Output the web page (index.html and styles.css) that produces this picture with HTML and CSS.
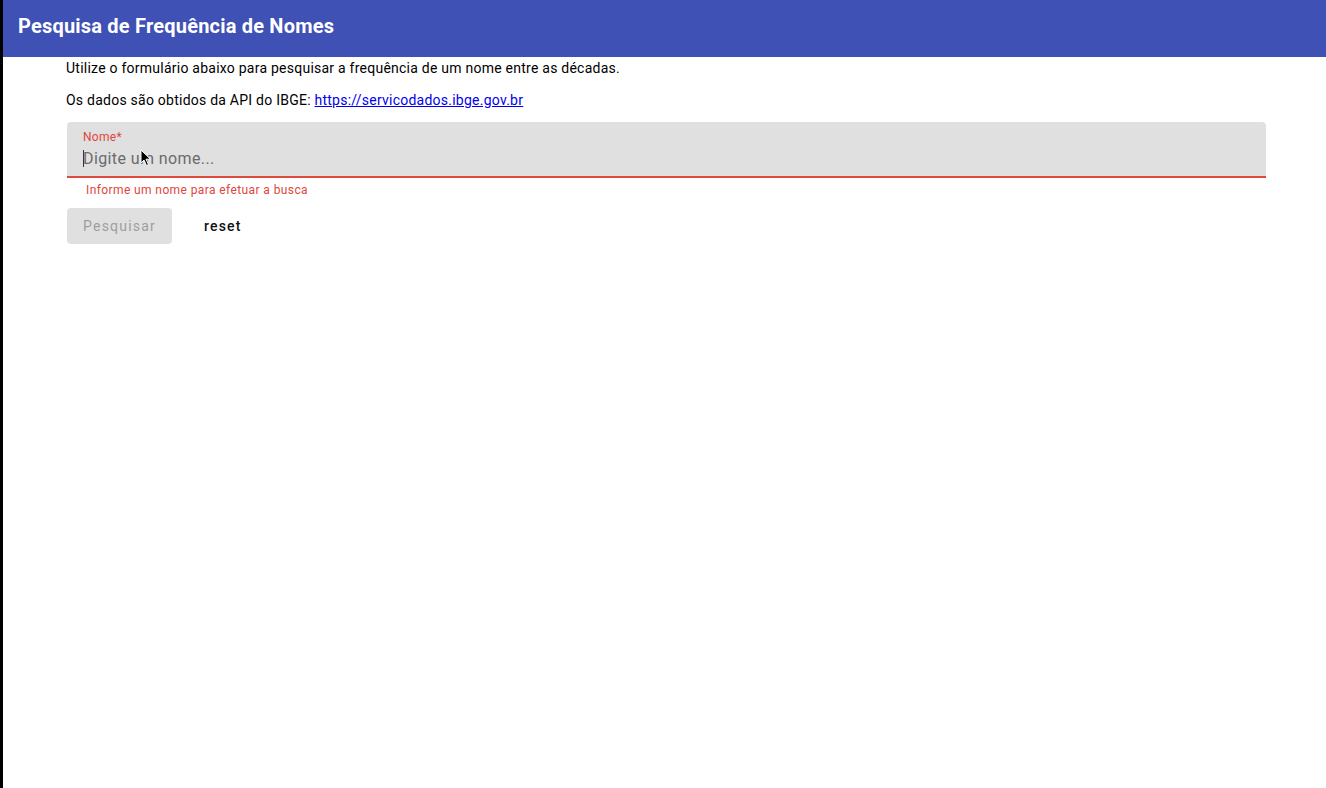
FILE: index.html
```
<!DOCTYPE html>
<html lang="pt">
<head>
<meta charset="utf-8">
<title>Pesquisa de Frequência de Nomes</title>
<link rel="stylesheet" href="styles.css">
</head>
<body>
<div class="frame">
  <header class="toolbar">
    <span class="title">Pesquisa de Frequência de Nomes</span>
  </header>
  <main class="content">
    <p class="intro">Utilize o formulário abaixo para pesquisar a frequência de um nome entre as décadas.</p>
    <p class="intro">Os dados são obtidos da API do IBGE: <a href="#" class="link">https://servicodados.ibge.gov.br</a></p>
    <div class="field">
      <label class="label">Nome*</label>
      <div class="input-row">
        <span class="caret"></span>
        <span class="placeholder">Digite um nome...</span>
        <svg class="pointer" width="12" height="18" viewBox="0 0 12 18"><path d="M1 1 L1 14 L4 11 L6.5 16.5 L8.5 15.5 L6 10.2 L10.5 10.2 Z" fill="#000" stroke="#fff" stroke-width="1"/></svg>
      </div>
    </div>
    <div class="error">Informe um nome para efetuar a busca</div>
    <div class="actions">
      <button class="btn btn-disabled" disabled>Pesquisar</button>
      <button class="btn btn-text">reset</button>
    </div>
  </main>
</div>
</body>
</html>
```
FILE: styles.css
```
html, body {
  margin: 0;
  padding: 0;
  height: 100%;
}
body {
  background: #000;
  font-family: Roboto, "Helvetica Neue", Arial, sans-serif;
}
.frame {
  margin-left: 3px;
  min-height: 100%;
  background: #fff;
}
.toolbar {
  height: 57px;
  background: #3f51b5;
  color: #fff;
  display: flex;
  align-items: center;
  padding: 0 15px;
}
.title {
  font-size: 20px;
  font-weight: 700;
  letter-spacing: 0.2px;
  margin-top: -5px;
}
.content {
  padding: 1px 0 0 63px;
  width: 1200px;
}
.intro {
  margin: 0 0 12px;
  font-size: 14px;
  line-height: 20px;
  color: #000;
  letter-spacing: 0.24px;
}
.link {
  color: #0000ee;
}
.field {
  margin-left: 1px;
  background: #e0e0e0;
  border-radius: 4px 4px 0 0;
  border-bottom: 2px solid #e14a3e;
  height: 54px;
  padding: 0 16px;
  box-sizing: content-box;
  display: flex;
  flex-direction: column;
}
.label {
  color: #e0463b;
  font-size: 12px;
  line-height: 14px;
  margin-top: 8px;
  letter-spacing: 0.3px;
}
.input-row {
  position: relative;
  height: 22px;
  display: flex;
  align-items: center;
  margin-top: 3px;
}
.caret {
  width: 1px;
  height: 17px;
  background: #333;
}
.placeholder {
  font-size: 16px;
  color: #6b6b6b;
  letter-spacing: 0.4px;
  margin-left: -1px;
}
.pointer {
  position: absolute;
  left: 57px;
  top: 2px;
}
.error {
  margin: 5px 0 0 20px;
  font-size: 12px;
  line-height: 14px;
  color: #e0463b;
  letter-spacing: 0.4px;
}
.actions {
  margin: 11px 0 0 1px;
  display: flex;
  gap: 16px;
}
.btn {
  font-family: Roboto, Arial, sans-serif;
  font-size: 14px;
  font-weight: 500;
  letter-spacing: 1.2px;
  height: 36px;
  border: none;
  border-radius: 4px;
  padding: 0 16px;
}
.btn-disabled {
  background: #e0e0e0;
  color: #9e9e9e;
  width: 105px;
  font-weight: 400;
}
.btn-text {
  background: transparent;
  color: #111;
}
```
